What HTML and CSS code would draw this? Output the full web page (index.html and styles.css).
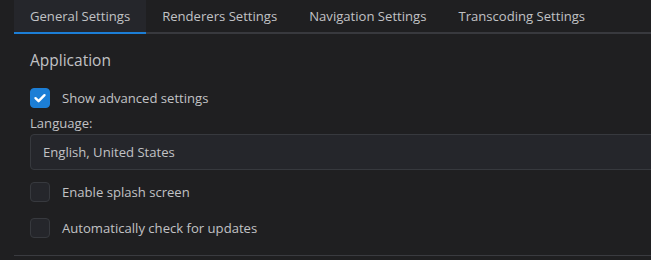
FILE: index.html
```html
<!DOCTYPE html>
<html>
<head>
<meta charset="utf-8">
<link rel="stylesheet" href="styles.css">
</head>
<body>
<div class="page">
  <div class="tabs">
    <div class="tab active">General Settings</div>
    <div class="tab">Renderers Settings</div>
    <div class="tab">Navigation Settings</div>
    <div class="tab">Transcoding Settings</div>
  </div>
  <div class="panel">
    <div class="section-title">Application</div>
    <label class="check">
      <span class="box checked">
        <svg viewBox="0 0 20 20" width="20" height="20"><path d="M5.5 10.2 L8.6 13.2 L14.5 7.2" fill="none" stroke="#fff" stroke-width="2.4" stroke-linecap="round" stroke-linejoin="round"/></svg>
      </span>
      <span class="check-label">Show advanced settings</span>
    </label>
    <div class="field">
      <div class="field-label">Language:</div>
      <div class="input">English, United States</div>
    </div>
    <label class="check">
      <span class="box"></span>
      <span class="check-label">Enable splash screen</span>
    </label>
    <label class="check">
      <span class="box"></span>
      <span class="check-label">Automatically check for updates</span>
    </label>
  </div>
</div>
</body>
</html>
```
FILE: styles.css
```css
html, body {
  margin: 0;
  padding: 0;
  background: #1f1f21;
  overflow: hidden;
}
body {
  font-family: "Open Sans", "Noto Sans", sans-serif;
  color: #c1c2c5;
  font-size: 13.1px;
}
.page {
  width: 720px;
  padding-left: 14px;
}
.tabs {
  display: flex;
  border-bottom: 2px solid #38393e;
  height: 32px;
}
.tab {
  padding: 0 16px;
  line-height: 32px;
  height: 32px;
  margin-bottom: -2px;
  border-bottom: 2px solid transparent;
  color: #c1c2c5;
  white-space: nowrap;
}
.tab.active {
  background: #25262b;
  border-bottom-color: #1c7ed6;
}
.panel {
  padding: 15px 0 17px 16px;
  border-bottom: 1px solid #3a3b40;
}
.section-title {
  font-size: 15.5px;
  line-height: 22px;
  height: 22px;
  margin-bottom: 17px;
}
.check {
  display: flex;
  align-items: center;
  gap: 12px;
  height: 20px;
}
.box {
  width: 20px;
  height: 20px;
  box-sizing: border-box;
  border: 1px solid #37393e;
  border-radius: 4px;
  background: #25262b;
  flex: none;
  display: flex;
}
.box.checked {
  background: #1c7ed6;
  border-color: #1c7ed6;
}
.box.checked svg { margin: -1px; }
.field {
  margin-top: 5px;
  margin-bottom: 12px;
}
.field-label {
  line-height: 20px;
}
.input {
  margin-top: 1px;
  height: 36px;
  box-sizing: border-box;
  border: 1px solid #37393e;
  border-radius: 4px;
  background: #25262b;
  padding-left: 12px;
  line-height: 34px;
}
.field + .check { margin-bottom: 16px; }
```
